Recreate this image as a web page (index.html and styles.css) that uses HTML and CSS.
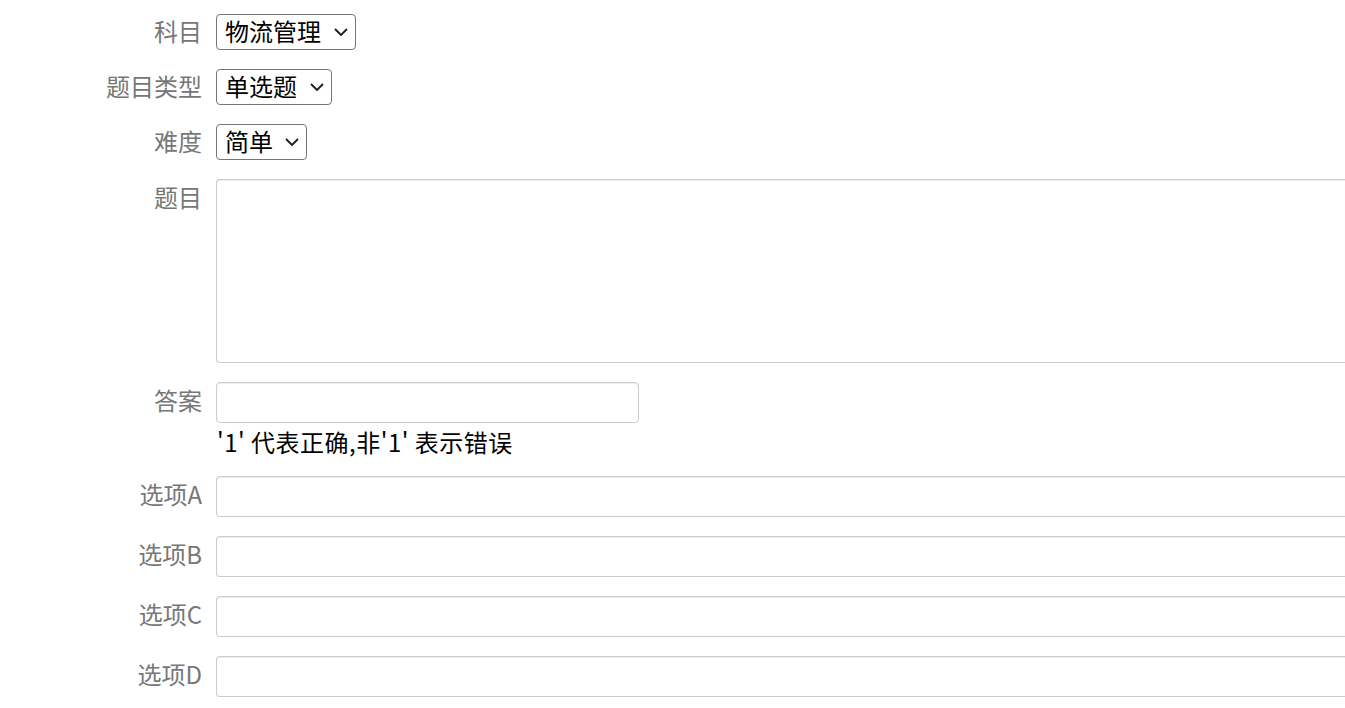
FILE: index.html
```html
<!DOCTYPE html>
<html lang="zh-CN">
<head>
<meta charset="utf-8">
<title>题目编辑</title>
<link rel="stylesheet" href="styles.css">
</head>
<body>
<form class="form">
  <div class="row row-select">
    <label class="label">科目</label>
    <div class="control">
      <span class="sel-wrap">
        <select class="select sel-subject"><option>物流管理</option></select>
        <svg class="chev" viewBox="0 0 14 8" aria-hidden="true"><path d="M1 1 L7 7 L13 1" fill="none" stroke="#1a1a1a" stroke-width="1.8"/></svg>
      </span>
    </div>
  </div>
  <div class="row row-select">
    <label class="label">题目类型</label>
    <div class="control">
      <span class="sel-wrap">
        <select class="select sel-type"><option>单选题</option></select>
        <svg class="chev" viewBox="0 0 14 8" aria-hidden="true"><path d="M1 1 L7 7 L13 1" fill="none" stroke="#1a1a1a" stroke-width="1.8"/></svg>
      </span>
    </div>
  </div>
  <div class="row row-select">
    <label class="label">难度</label>
    <div class="control">
      <span class="sel-wrap">
        <select class="select sel-level"><option>简单</option></select>
        <svg class="chev" viewBox="0 0 14 8" aria-hidden="true"><path d="M1 1 L7 7 L13 1" fill="none" stroke="#1a1a1a" stroke-width="1.8"/></svg>
      </span>
    </div>
  </div>
  <div class="row row-text">
    <label class="label label-top">题目</label>
    <div class="control">
      <textarea class="input textarea"></textarea>
    </div>
  </div>
  <div class="row row-answer">
    <label class="label">答案</label>
    <div class="control">
      <input class="input answer" type="text">
      <div class="help">'1' 代表正确,非'1' 表示错误</div>
    </div>
  </div>
  <div class="row">
    <label class="label">选项A</label>
    <div class="control"><input class="input wide" type="text"></div>
  </div>
  <div class="row">
    <label class="label">选项B</label>
    <div class="control"><input class="input wide" type="text"></div>
  </div>
  <div class="row">
    <label class="label">选项C</label>
    <div class="control"><input class="input wide" type="text"></div>
  </div>
  <div class="row">
    <label class="label">选项D</label>
    <div class="control"><input class="input wide" type="text"></div>
  </div>
</form>
</body>
</html>
```
FILE: styles.css
```css
html, body {
  margin: 0;
  padding: 0;
  overflow: hidden;
  background: #fff;
}
body {
  font-family: "Noto Sans CJK SC", "Noto Sans", sans-serif;
  font-size: 24px;
  color: #111;
}
.form {
  display: flex;
  flex-direction: column;
  gap: 19px;
  padding-top: 14px;
  width: 100%;
}
.row {
  display: flex;
  align-items: flex-start;
  gap: 14px;
}
.label {
  width: 202px;
  flex: none;
  text-align: right;
  color: #777;
  font-size: 24px;
  line-height: 41px;
  height: 41px;
  margin-top: -3px;
}
.row-select .label {
  line-height: 36px;
  height: 36px;
  margin-top: -1px;
}
.label-top {
  line-height: 36px;
  margin-top: 0;
}
.control {
  display: flex;
  flex-direction: column;
  align-items: flex-start;
  flex: 1;
  min-width: 0;
}
.sel-wrap {
  position: relative;
  display: inline-block;
  height: 36px;
}
.select {
  -webkit-appearance: none;
  appearance: none;
  font-family: "Noto Sans CJK SC", "Noto Sans", sans-serif;
  font-size: 24px;
  line-height: 30px;
  height: 36px;
  color: #000;
  background: #fff;
  border: 1px solid #767676;
  border-radius: 4px;
  padding: 0 0 3px 8px;
  margin: 0;
  box-sizing: border-box;
  display: block;
}
.chev {
  position: absolute;
  right: 8px;
  top: 14px;
  width: 14px;
  height: 8px;
  pointer-events: none;
}
.sel-subject { width: 140px; }
.sel-type { width: 116px; }
.sel-level { width: 91px; }
.input {
  box-sizing: border-box;
  border: 1px solid #ccc;
  border-radius: 4px;
  box-shadow: inset 0 1px 1px rgba(0, 0, 0, 0.075);
  background: #fff;
  margin: 0;
  font-family: "Noto Sans CJK SC", "Noto Sans", sans-serif;
  font-size: 24px;
  padding: 6px 12px;
}
.textarea,
.wide {
  width: 100%;
  border-right: 0;
  border-top-right-radius: 0;
  border-bottom-right-radius: 0;
  display: block;
}
.textarea {
  height: 184px;
  resize: none;
}
.wide {
  height: 41px;
}
.answer {
  width: 423px;
  height: 41px;
  display: block;
}
.help {
  color: #000;
  font-size: 24px;
  line-height: 31px;
  height: 31px;
  padding-top: 3px;
  padding-left: 1px;
  letter-spacing: 0.5px;
}
```
